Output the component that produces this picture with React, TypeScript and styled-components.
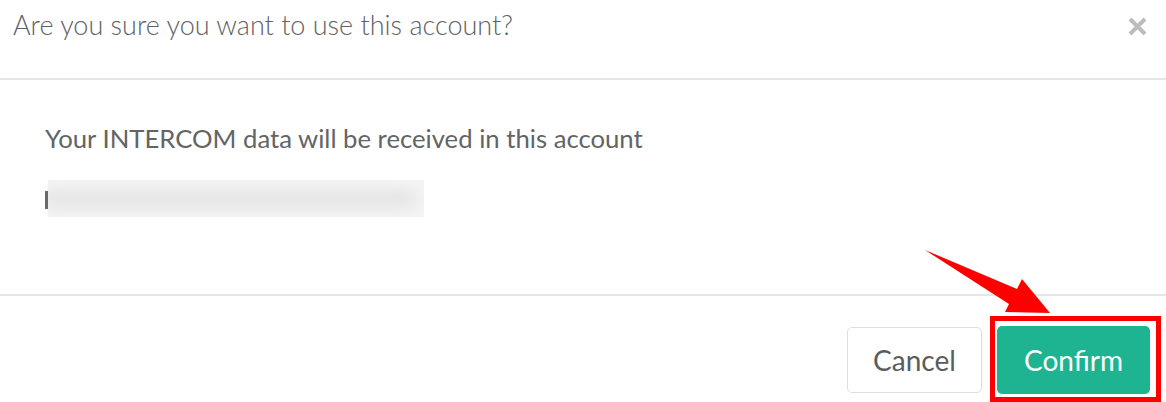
import React from "react";
import styled, { createGlobalStyle } from "styled-components";

const Global = createGlobalStyle`
  html, body { margin: 0; padding: 0; background: #ffffff; }
  body { font-family: Lato, "Open Sans", sans-serif; }
  * { box-sizing: border-box; }
`;

const Modal = styled.div`
  position: relative;
  width: 1166px;
  height: 402px;
  background: #fff;
  overflow: hidden;
  display: flex;
  flex-direction: column;
`;

const Header = styled.div`
  height: 80px;
  padding: 8px 19px 0 13px;
  display: flex;
  justify-content: space-between;
  align-items: flex-start;
  border-bottom: 2px solid #e6e6e6;
`;

const Title = styled.h3`
  margin: 0;
  font-family: Lato, sans-serif;
  font-weight: 300;
  font-size: 27px;
  line-height: 34px;
  color: #5f6264;
`;

const Close = styled.button`
  margin-top: 9px;
  padding: 0;
  border: 0;
  background: transparent;
  width: 19px;
  height: 19px;
  display: flex;
`;

const Body = styled.div`
  height: 216px;
  padding: 42px 45px 0;
  border-bottom: 2px solid #e6e6e6;
  display: flex;
  flex-direction: column;
  gap: 26px;
`;

const Message = styled.p`
  margin: 0;
  font-size: 25.7px;
  line-height: 32px;
  color: #626466;
`;

const AccountLine = styled.div`
  display: flex;
  align-items: center;
  height: 37px;
`;

const Caret = styled.span`
  width: 3px;
  height: 18px;
  background: #6a6a6a;
  margin-top: 2px;
`;

const Redacted = styled.div`
  width: 376px;
  height: 37px;
  overflow: hidden;
  background: #f5f5f5;
  position: relative;
`;

const Smudge = styled.div`
  position: absolute;
  left: -6px;
  right: 6px;
  top: 10px;
  height: 18px;
  background: #e3e3e3;
  border-radius: 9px;
  filter: blur(8px);
`;

const Footer = styled.div`
  position: relative;
  flex: 1;
  display: flex;
  justify-content: flex-end;
  align-items: flex-start;
  gap: 15px;
  padding: 30px 16px 0 0;
`;

const Button = styled.button<{ $primary?: boolean }>`
  font-family: Lato, sans-serif;
  font-size: 28px;
  border-radius: 5px;
  cursor: pointer;
  width: ${(p) => (p.$primary ? "153px" : "135px")};
  height: ${(p) => (p.$primary ? "68px" : "66px")};
  margin-top: ${(p) => (p.$primary ? "0" : "1px")};
  background: ${(p) => (p.$primary ? "#1eb491" : "#ffffff")};
  color: ${(p) => (p.$primary ? "#ffffff" : "#5a5c5e")};
  border: ${(p) => (p.$primary ? "none" : "1px solid #dcdfe2")};
  padding: 0;
`;

const Highlight = styled.div`
  position: absolute;
  left: 990px;
  top: 20px;
  width: 171px;
  height: 86px;
  border: 5px solid #ff0000;
  pointer-events: none;
`;

const Arrow = styled.svg`
  position: absolute;
  left: 920px;
  top: 244px;
  width: 140px;
  height: 76px;
  pointer-events: none;
`;

export default function App() {
  return (
    <>
      <Global />
      <Modal>
        <Header>
          <Title>Are you sure you want to use this account?</Title>
          <Close aria-label="Close">
            <svg width="19" height="19" viewBox="0 0 19 19">
              <path d="M2 2 L17 17 M17 2 L2 17" stroke="#bdbdbd" strokeWidth="4" />
            </svg>
          </Close>
        </Header>
        <Body>
          <Message>Your INTERCOM data will be received in this account</Message>
          <AccountLine>
            <Caret />
            <Redacted>
              <Smudge />
            </Redacted>
          </AccountLine>
        </Body>
        <Footer>
          <Button>Cancel</Button>
          <Button $primary>Confirm</Button>
          <Highlight />
        </Footer>
        <Arrow viewBox="920 244 140 76">
          <polygon
            points="925,250 1017,289 1022,279 1050,313 1005,312 1009,304"
            fill="#ff0000"
          />
        </Arrow>
      </Modal>
    </>
  );
}
